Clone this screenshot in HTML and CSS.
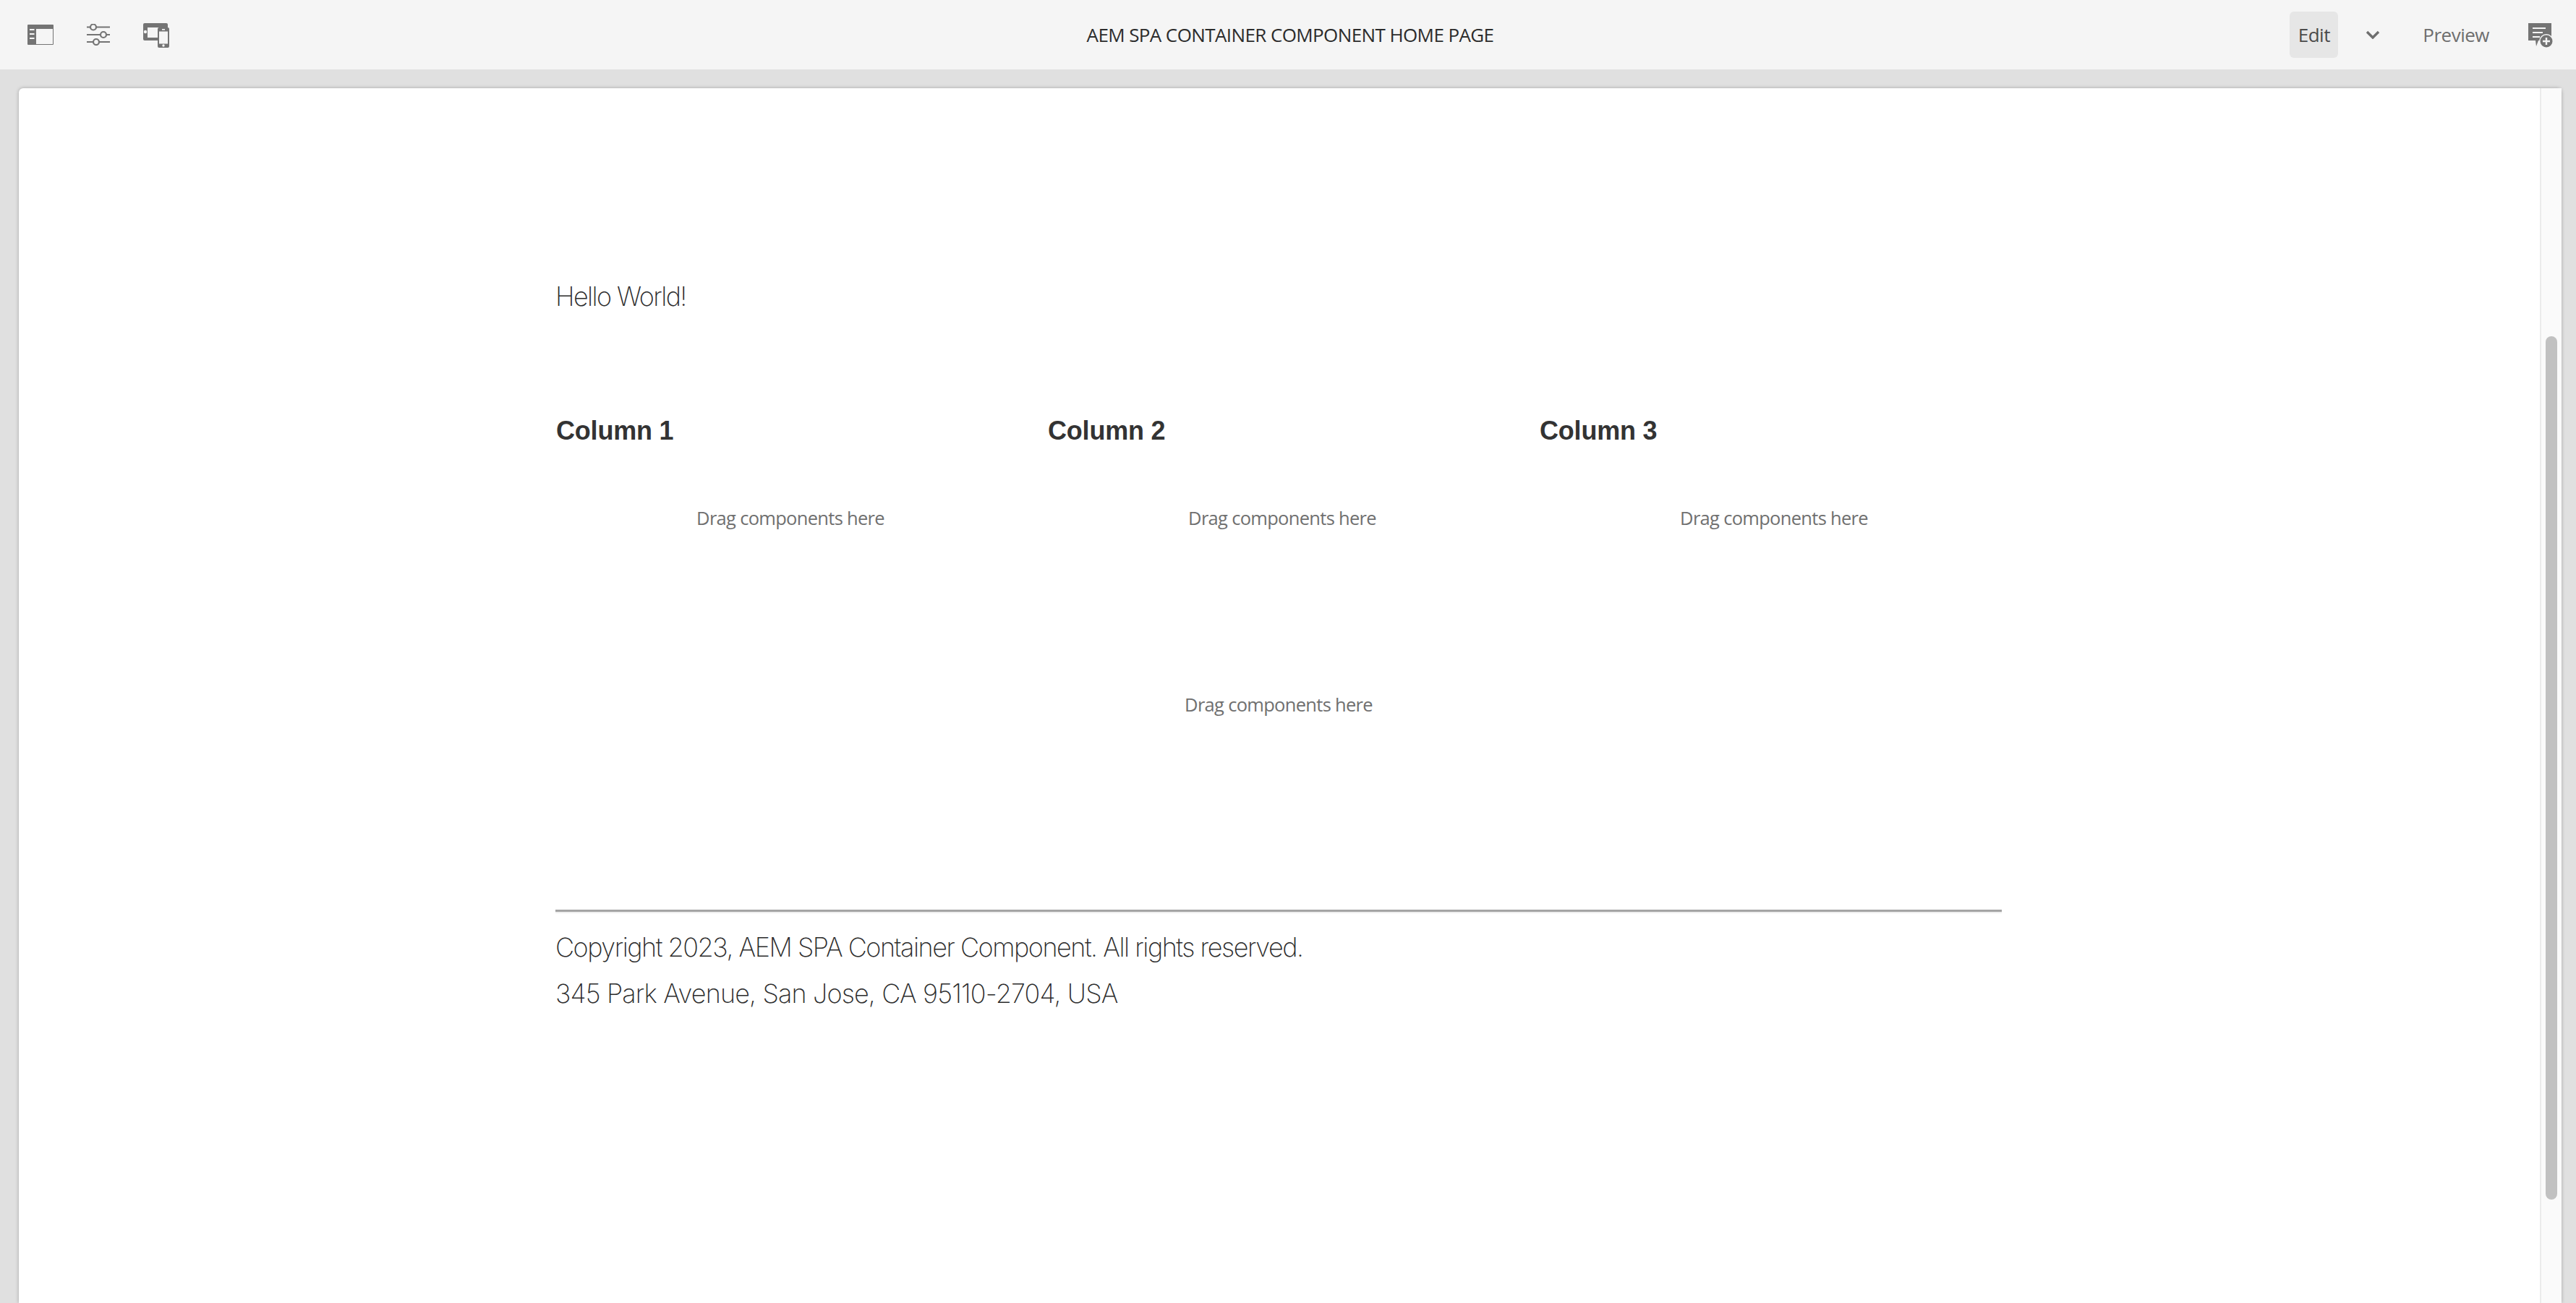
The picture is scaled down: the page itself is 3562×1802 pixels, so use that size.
FILE: index.html
```html
<!DOCTYPE html>
<html lang="en">
<head>
<meta charset="utf-8">
<title>AEM SPA Container Component Home Page</title>
<link rel="stylesheet" href="styles.css">
</head>
<body>
<header class="toolbar">
  <div class="tools">
    <svg class="icon rail-icon" viewBox="0 0 36 28"><path class="ink" fill-rule="evenodd" d="M1 0h34a1 1 0 0 1 1 1v26a1 1 0 0 1-1 1H1a1 1 0 0 1-1-1V1a1 1 0 0 1 1-1zM12 6v21h23V6z"/><path class="paper" d="M3 6h6.500v2H3zM3 12h6.500v2H3zM3 18h6.500v2H3z"/></svg>
    <svg class="icon sliders-icon" viewBox="0 0 32 30"><path class="line" d="M0 4.500h32M0 15h32M0 25h32"/><circle class="knob" cx="9" cy="4.500" r="4"/><circle class="knob" cx="23" cy="15" r="4"/><circle class="knob" cx="13" cy="25" r="4"/></svg>
    <svg class="icon devices-icon" viewBox="0 0 36 34"><path class="ink" fill-rule="evenodd" d="M2 0h30a2 2 0 0 1 2 2v4H6v14h14v4H2a2 2 0 0 1-2-2V2a2 2 0 0 1 2-2z"/><circle class="paper" cx="3" cy="12" r="2.200"/><path class="ink" fill-rule="evenodd" d="M22 6h12a2 2 0 0 1 2 2v24a2 2 0 0 1-2 2H22a2 2 0 0 1-2-2V8a2 2 0 0 1 2-2zM22 11.500v17h12v-17z"/><path class="paper" d="M26 8h4v1.600h-4z"/><circle class="paper" cx="28" cy="31" r="1.700"/></svg>
  </div>
  <h1 class="title">AEM SPA CONTAINER COMPONENT HOME PAGE</h1>
  <div class="actions">
    <span class="mode mode-active">Edit</span>
    <svg class="chevron" viewBox="0 0 20 12"><path d="M2 2l8 8 8-8"/></svg>
    <span class="mode mode-preview">Preview</span>
    <svg class="icon comment-icon" viewBox="0 0 36 34"><path class="ink" d="M0 0h32v24H14l-3 8-1-8H0z"/><path class="paper" d="M6 6h18v2H6zM6 12h14v2H6zM6 18h10v2H6z"/><circle class="paper" cx="25" cy="25" r="10"/><circle class="ink" cx="25" cy="25" r="8.500"/><path class="plus" d="M25 20v10M20 25h10"/></svg>
  </div>
</header>
<div class="stage">
  <div class="page">
    <main class="content">
      <p class="hello">Hello World!</p>
      <div class="columns">
        <section class="column">
          <h2 class="column-title">Column 1</h2>
          <p class="placeholder">Drag components here</p>
        </section>
        <section class="column">
          <h2 class="column-title">Column 2</h2>
          <p class="placeholder">Drag components here</p>
        </section>
        <section class="column">
          <h2 class="column-title">Column 3</h2>
          <p class="placeholder">Drag components here</p>
        </section>
      </div>
      <p class="placeholder placeholder-wide">Drag components here</p>
      <footer class="footer">
        <p class="footer-line footer-copy">Copyright 2023, AEM SPA Container Component. All rights reserved.</p>
        <p class="footer-line footer-address">345 Park Avenue, San Jose, CA 95110-2704, USA</p>
      </footer>
    </main>
    <div class="gutter"><div class="thumb"></div></div>
  </div>
</div>
</body>
</html>
```
FILE: styles.css
```css
* { box-sizing: border-box; }
html, body { margin: 0; height: 100%; overflow: hidden; }
body { background: #e0e0e0; display: flex; flex-direction: column; font-family: "Open Sans", "Noto Sans", sans-serif; }
p, h1, h2 { margin: 0; }

.toolbar { height: 96px; flex: none; background: #f5f5f5; display: grid; grid-template-columns: 1fr auto 1fr; align-items: center; padding: 0 30px 0 38px; }
.tools { display: flex; align-items: center; }
.actions { display: flex; align-items: center; justify-content: flex-end; }
.title { font-size: 26px; font-weight: 400; color: #2c2c2c; letter-spacing: -0.6px; margin-left: -2px; white-space: nowrap; }

.icon { display: block; flex: none; }
.ink { fill: #747474; }
.paper { fill: #f5f5f5; }
.line { stroke: #747474; stroke-width: 2.2; fill: none; }
.knob { fill: #f5f5f5; stroke: #747474; stroke-width: 2.2; }
.plus { stroke: #f5f5f5; stroke-width: 2.4; fill: none; }
.rail-icon { width: 36px; height: 28px; margin-top: 0; }
.sliders-icon { width: 32px; height: 30px; margin-left: 46px; margin-top: 0; }
.devices-icon { width: 36px; height: 34px; margin-left: 46px; margin-top: 2px; }
.comment-icon { width: 36px; height: 34px; margin-left: 54px; margin-top: 2px; }

.mode { font-size: 26px; letter-spacing: -0.5px; color: #6e6e6e; }
.mode-active { width: 67px; height: 64px; line-height: 64px; text-align: center; border-radius: 6px; background: #e6e6e6; color: #4b4b4b; }
.chevron { width: 20px; height: 12px; margin-left: 38px; margin-right: 59px; fill: none; stroke: #6e6e6e; stroke-width: 3.400; }

.stage { flex: 1; min-height: 0; padding: 26px 20px 0 26px; }
.page { height: 100%; background: #fff; border-radius: 6px 6px 0 0; box-shadow: 0 0 5px rgba(0, 0, 0, 0.28); display: flex; }
.content { flex: 1; padding: 264px 0 0 742px; color: #2c2c2c; }
.gutter { width: 30px; flex: none; background: #fafafa; border-left: 2px solid #ebebeb; padding: 343px 6px 0 6px; }
.thumb { height: 1194px; width: 16px; border-radius: 8px; background: #c1c1c1; }

.hello { font-family: Inter, sans-serif; font-weight: 200; font-size: 36px; line-height: 48px; letter-spacing: -1.6px; }
.columns { display: grid; grid-template-columns: repeat(3, 650px); column-gap: 30px; margin-top: 140px; width: 2000px; }
.column-title { font-family: "Liberation Sans", Arial, sans-serif; font-weight: 700; font-size: 36px; line-height: 44px; letter-spacing: -0.2px; color: #333; padding-left: 1px; }
.placeholder { font-size: 25.500px; line-height: 36px; letter-spacing: -0.7px; color: #707070; text-align: center; margin-top: 80px; }
.placeholder-wide { width: 2000px; margin-top: 222px; }
.footer { width: 2000px; margin-top: 266px; border-top: 3px solid #a4a4a4; padding-top: 17px; font-family: Inter, sans-serif; font-weight: 200; font-size: 36px; }
.footer-line { line-height: 64px; }
.footer-copy { letter-spacing: -1.480px; }
.footer-address { letter-spacing: -0.850px; }
.footer::before { content: ""; display: block; height: 2px; margin-top: -17px; margin-bottom: 15px; background: #eeeeee; }
```
